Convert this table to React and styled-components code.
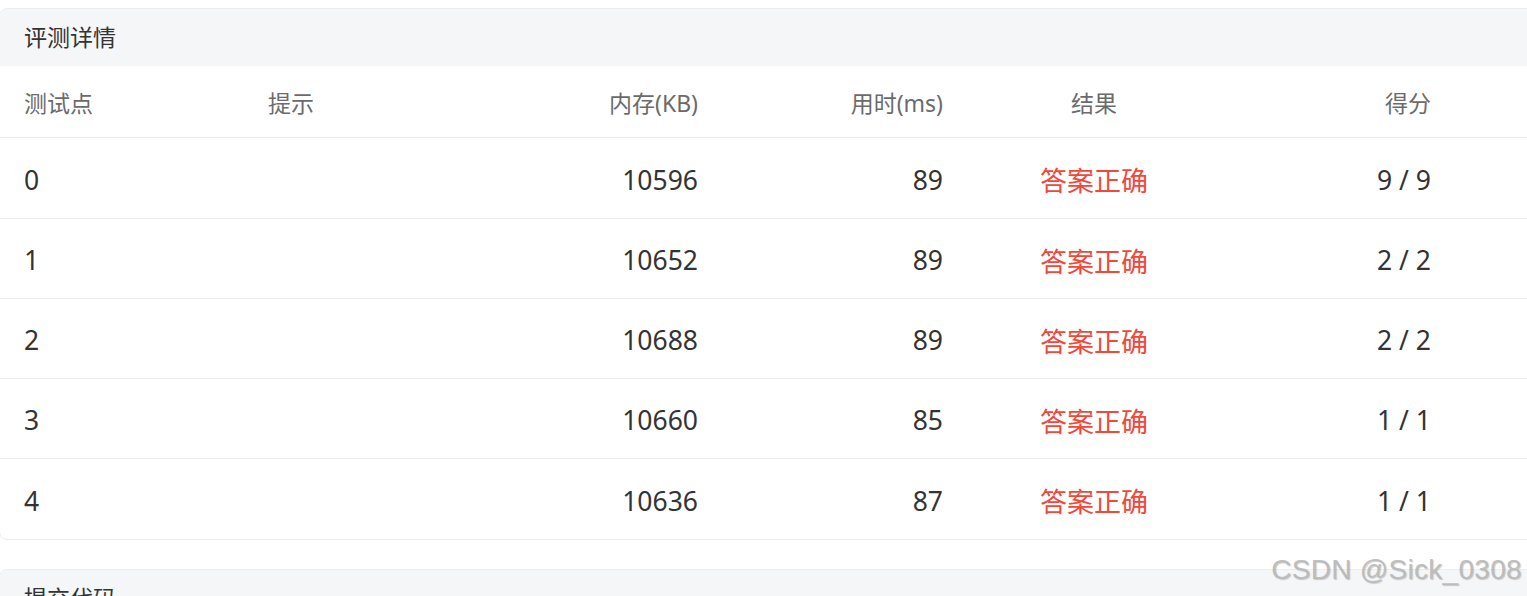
import React from 'react';
import styled, { createGlobalStyle } from 'styled-components';

const GlobalStyle = createGlobalStyle`
  html, body {
    margin: 0;
    padding: 0;
    background: #fff;
    overflow: hidden;
  }
  body {
    font-family: "Noto Sans", "Noto Sans CJK SC", sans-serif;
  }
`;

const Page = styled.div`
  position: relative;
  width: 1527px;
  height: 596px;
  overflow: hidden;
  padding-top: 8px;
  box-sizing: border-box;
`;

const Card = styled.section`
  width: 1560px;
  margin-left: -1px;
  border: 1px solid #ebedf0;
  border-radius: 8px;
  overflow: hidden;
  background: #fff;
  margin-bottom: 29px;
`;

const CardHead = styled.div`
  height: 57px;
  background: #f5f6f8;
  display: flex;
  align-items: center;
  padding-left: 24px;
  padding-bottom: 3px;
  box-sizing: border-box;
  font-size: 23px;
  color: #333;
`;

const Row = styled.div`
  display: grid;
  grid-template-columns: 244px 244px 234px 245px 254px 234px 1fr;
  box-sizing: border-box;
  height: ${p => (p.head ? '72px' : p.first ? '81px' : '80px')};
  padding-top: ${p => (p.head ? '0' : '3px')};
  align-items: center;
  border-bottom: ${p => (p.last ? 'none' : '1px solid #ebedf0')};
  font-size: ${p => (p.head ? '23px' : '26.5px')};
  color: ${p => (p.head ? '#6b6b6b' : '#333')};
`;

const Cell = styled.div`
  padding: 0 24px;
  text-align: ${p => p.align || 'left'};
  white-space: nowrap;
  color: ${p => (p.ok ? '#f2473b' : 'inherit')};
  font-size: ${p => (p.ok ? '27px' : 'inherit')};
`;

const Watermark = styled.div`
  position: absolute;
  right: 5px;
  bottom: 10px;
  font-family: "Liberation Sans", Arial, sans-serif;
  font-size: 28px;
  color: rgba(185, 185, 185, 0.9);
  text-shadow: 1px 1px 1px rgba(110, 110, 110, 0.35);
  letter-spacing: 0.3px;
`;

const rows = [
  { id: 0, mem: 10596, time: 89, score: '9 / 9' },
  { id: 1, mem: 10652, time: 89, score: '2 / 2' },
  { id: 2, mem: 10688, time: 89, score: '2 / 2' },
  { id: 3, mem: 10660, time: 85, score: '1 / 1' },
  { id: 4, mem: 10636, time: 87, score: '1 / 1' },
];

export default function App() {
  return (
    <Page>
      <GlobalStyle />
      <Card>
        <CardHead>评测详情</CardHead>
        <Row head>
          <Cell>测试点</Cell>
          <Cell>提示</Cell>
          <Cell align="right">内存(KB)</Cell>
          <Cell align="right">用时(ms)</Cell>
          <Cell align="center">结果</Cell>
          <Cell align="right">得分</Cell>
          <Cell />
        </Row>
        {rows.map((r, i) => (
          <Row key={r.id} first={i === 0} last={i === rows.length - 1}>
            <Cell>{r.id}</Cell>
            <Cell />
            <Cell align="right">{r.mem}</Cell>
            <Cell align="right">{r.time}</Cell>
            <Cell align="center" ok>答案正确</Cell>
            <Cell align="right">{r.score}</Cell>
            <Cell />
          </Row>
        ))}
      </Card>
      <Card>
        <CardHead>提交代码</CardHead>
      </Card>
      <Watermark>CSDN @Sick_0308</Watermark>
    </Page>
  );
}
